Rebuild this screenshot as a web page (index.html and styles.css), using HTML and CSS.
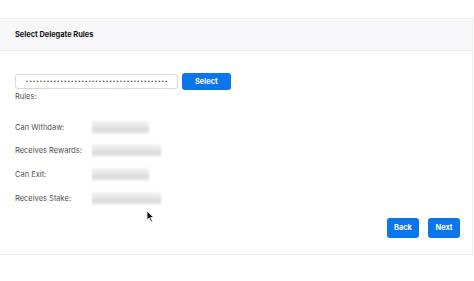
FILE: index.html
```html
<!DOCTYPE html>
<html lang="en">
<head>
  <meta charset="UTF-8">
  <meta name="viewport" content="width=device-width, initial-scale=1.0">
  <title>Select Delegate Rules</title>
  <link rel="stylesheet" href="styles.css">
</head>
<body>
  <div class="card">
    <div class="card-header">
      <h2>Select Delegate Rules</h2>
    </div>
    <div class="card-body">
      <div class="select-row">
        <div class="key-input">&bull;&bull;&bull;&bull;&bull;&bull;&bull;&bull;&bull;&bull;&bull;&bull;&bull;&bull;&bull;&bull;&bull;&bull;&bull;&bull;&bull;&bull;&bull;&bull;&bull;&bull;&bull;&bull;&bull;&bull;&bull;&bull;&bull;&bull;&bull;&bull;&bull;&bull;&bull;&bull;&bull;</div>
        <button class="btn">Select</button>
      </div>
      <p class="rules-title">Rules:</p>
      <div class="rules">
        <div class="rule">
          <span class="rule-label">Can Withdaw:</span>
          <span class="rule-value short"></span>
        </div>
        <div class="rule">
          <span class="rule-label">Receives Rewards:</span>
          <span class="rule-value"></span>
        </div>
        <div class="rule">
          <span class="rule-label">Can Exit:</span>
          <span class="rule-value short"></span>
        </div>
        <div class="rule">
          <span class="rule-label">Receives Stake:</span>
          <span class="rule-value"></span>
        </div>
      </div>
      <div class="btn-container">
        <button class="btn">Back</button>
        <button class="btn">Next</button>
      </div>
    </div>
  </div>
  <svg class="cursor" width="9" height="13" viewBox="0 0 9 13">
    <path d="M1 1 L1 10 L3.2 8 L5 12 L6.4 11.3 L4.7 7.5 L7.8 7.5 Z" fill="#111" stroke="#fff" stroke-width="0.8"/>
  </svg>
</body>
</html>
```

FILE: styles.css
```css
* {
  margin: 0;
  padding: 0;
  box-sizing: border-box;
}

body {
  font-family: 'Inter', 'Liberation Sans', sans-serif;
  background-color: #ffffff;
  color: #3a3a3c;
  padding-top: 18px;
  width: 474px;
  height: 281px;
  overflow: hidden;
  position: relative;
}

.card {
  margin: 0 1px 0 0;
  border: 1px solid #eeecf0;
  border-left: none;
}

.card-header {
  height: 32px;
  display: flex;
  align-items: center;
  padding: 0 15px;
  background-color: #f8f7f9;
  border-bottom: 1px solid #eceaee;
}

.card-header h2 {
  font-size: 7.4px;
  font-weight: 700;
  color: #111113;
}

.card-body {
  padding: 22px 12px 16px 15px;
}

.select-row {
  display: flex;
  align-items: center;
  gap: 4px;
}

.key-input {
  width: 163px;
  height: 15px;
  border: 1px solid #cfd8e6;
  border-radius: 3px;
  padding: 0 0 0 10px;
  font-family: 'Liberation Sans', sans-serif;
  font-size: 5.8px;
  line-height: 13px;
  letter-spacing: 1.45px;
  color: #444;
  white-space: nowrap;
  overflow: hidden;
}

.btn {
  font-family: 'Inter', 'Liberation Sans', sans-serif;
  font-size: 7.4px;
  font-weight: 700;
  color: #ffffff;
  background-color: #0b75ec;
  border: none;
  border-radius: 3px;
  height: 17px;
  padding: 0 13px;
}

.rules-title {
  font-size: 7.5px;
  color: #4f4f52;
  margin-top: 2px;
}

.rules {
  display: flex;
  flex-direction: column;
  gap: 9.9px;
  margin-top: 19px;
}

.rule {
  display: flex;
  align-items: center;
  height: 14px;
}

.rule-label {
  width: 77px;
  font-size: 7.5px;
  color: #4f4f52;
}

.rule-value {
  width: 69px;
  height: 13px;
  background: linear-gradient(180deg, #f4f4f4 0%, #e6e6e6 40%, #d9d9d9 70%, #f2f2f2 100%);
  filter: blur(1.2px);
}

.rule-value.short {
  width: 57px;
}

.btn-container {
  display: flex;
  justify-content: flex-end;
  gap: 9px;
  margin-top: 12px;
}

.btn-container .btn {
  height: 20px;
  width: 32px;
  padding: 0;
}

.cursor {
  position: absolute;
  left: 146px;
  top: 210px;
}
```
